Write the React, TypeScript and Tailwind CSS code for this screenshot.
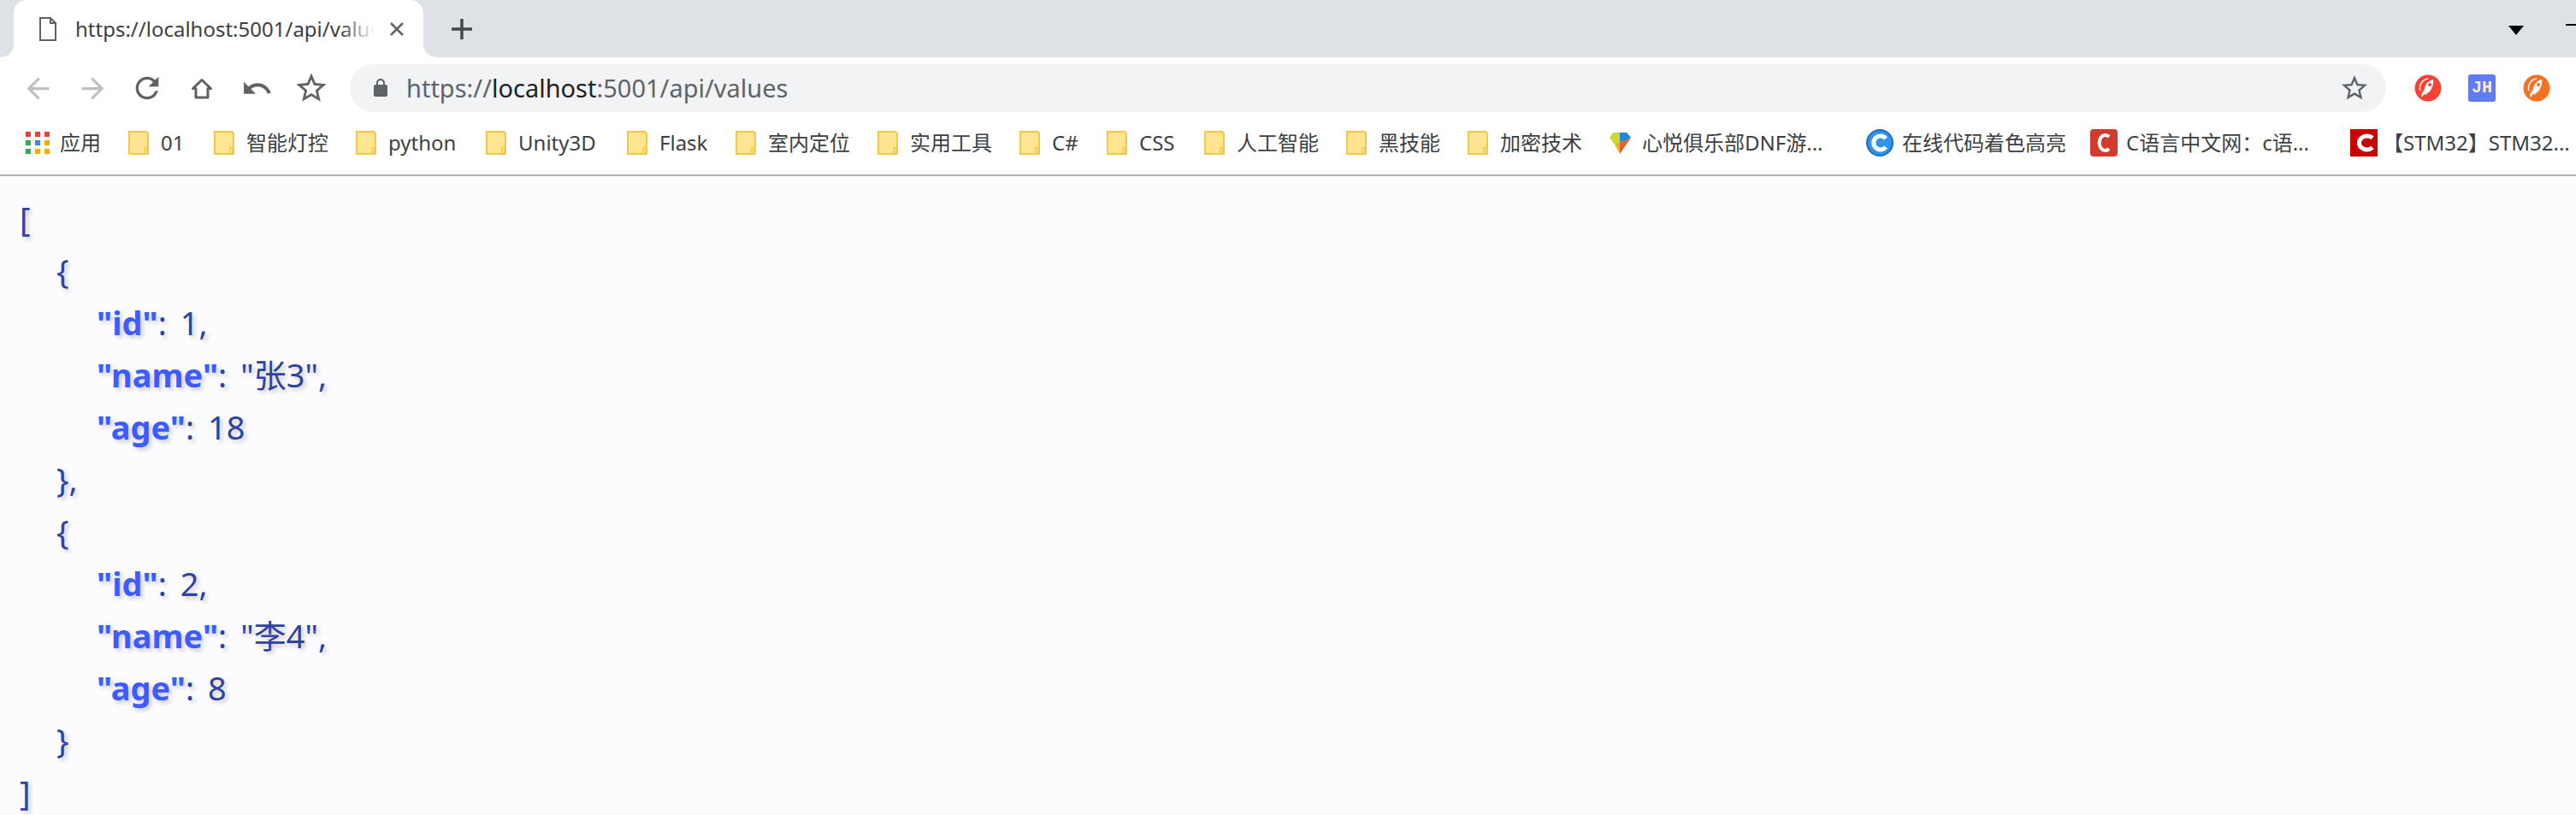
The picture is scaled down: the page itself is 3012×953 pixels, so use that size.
import React from 'react';

const uiFont = "font-['Noto_Sans','Noto_Sans_CJK_SC',sans-serif]";

const Icon = ({ d, className }: { d: string; className: string }) => (
  <svg viewBox="0 0 24 24" className={className} fill="currentColor">
    <path d={d} />
  </svg>
);

const STAR =
  'M22 9.24l-7.19-.62L12 2 9.19 8.63 2 9.24l5.46 4.73L5.82 21 12 17.27 18.18 21l-1.63-7.03L22 9.24zM12 15.4l-3.76 2.27 1-4.28-3.32-2.88 4.38-.38L12 6.1l1.71 4.04 4.38.38-3.32 2.88 1 4.28L12 15.4z';
const BACK = 'M20 11H7.83l5.59-5.59L12 4l-8 8 8 8 1.41-1.41L7.83 13H20v-2z';
const FORWARD = 'M12 4l-1.41 1.41L16.17 11H4v2h12.17l-5.58 5.59L12 20l8-8z';
const RELOAD =
  'M17.65 6.35A7.958 7.958 0 0 0 12 4c-4.42 0-7.99 3.58-7.99 8s3.57 8 7.99 8c3.73 0 6.84-2.55 7.73-6h-2.08A5.99 5.99 0 0 1 12 18c-3.31 0-6-2.69-6-6s2.69-6 6-6c1.66 0 3.14.69 4.22 1.78L13 11h7V4l-2.35 2.35z';
const UNDO =
  'M12.5 8c-2.65 0-5.05.99-6.9 2.6L2 7v9h9l-3.62-3.62c1.39-1.16 3.16-1.88 5.12-1.88 3.54 0 6.55 2.31 7.6 5.5l2.37-.78C21.08 11.03 17.15 8 12.5 8z';
const LOCK =
  'M18 8h-1V6c0-2.76-2.24-5-5-5S7 3.24 7 6v2H6c-1.1 0-2 .9-2 2v10c0 1.1.9 2 2 2h12c1.1 0 2-.9 2-2V10c0-1.1-.9-2-2-2zM9 8V6c0-1.66 1.34-3 3-3s3 1.34 3 3v2H9z';

const Folder = () => (
  <svg width="24" height="28" viewBox="0 0 24 28" className="shrink-0">
    <path d="M1 1h20l2 2v24H1z" fill="#ffe590" stroke="#eec94c" strokeWidth="2" />
    <path d="M19 27v-6a1.5 1.5 0 0 1 3 0v6" fill="none" stroke="#eec94c" strokeWidth="1.5" />
  </svg>
);

const AppsIcon = () => (
  <svg width="28" height="26" viewBox="0 0 28 26" className="shrink-0">
    <rect x="0" y="0" width="6" height="6" fill="#ea4335" />
    <rect x="11" y="0" width="6" height="6" fill="#ea4335" />
    <rect x="22" y="0" width="6" height="6" fill="#ea4335" />
    <rect x="0" y="10" width="6" height="6" fill="#34a853" />
    <rect x="11" y="10" width="6" height="6" fill="#4285f4" />
    <rect x="22" y="10" width="6" height="6" fill="#f9ab00" />
    <rect x="0" y="20" width="6" height="6" fill="#34a853" />
    <rect x="11" y="20" width="6" height="6" fill="#f9ab00" />
    <rect x="22" y="20" width="6" height="6" fill="#f9ab00" />
  </svg>
);

const DiamondIcon = () => (
  <svg width="32" height="28" viewBox="0 0 32 28" className="shrink-0">
    <path d="M8 2h8v10l-6 4L4 8z" fill="#c6d934" />
    <path d="M16 2h8l5 6-9 5-4-1z" fill="#1e88d8" />
    <path d="M10 16l6-4v15z" fill="#f5b31a" />
    <path d="M16 12l4 1 9-5-13 19z" fill="#e4622a" />
  </svg>
);

const BlueC = () => (
  <svg width="32" height="32" viewBox="0 0 32 32" className="shrink-0">
    <circle cx="16" cy="16" r="15" fill="#2f95ec" stroke="#1a6fc0" strokeWidth="2" />
    <path d="M23 11a8 8 0 1 0 0 10" fill="none" stroke="#fff" strokeWidth="5" />
  </svg>
);

const RedC = () => (
  <span className="flex h-8 w-8 shrink-0 items-center justify-center rounded-[4px] bg-[#d13b2f]">
    <svg width="18" height="24" viewBox="0 0 18 24">
      <path d="M15 5a7 9 0 1 0 0 14" fill="none" stroke="#fff" strokeWidth="4" />
    </svg>
  </span>
);

const SquareC = () => (
  <span className="flex h-8 w-8 shrink-0 items-center justify-center bg-[#c90000]">
    <svg width="26" height="22" viewBox="0 0 26 22">
      <path d="M23 5.500A9 8 0 1 0 23 16.500" fill="none" stroke="#fff" strokeWidth="5" />
    </svg>
  </span>
);

const Rocket = ({ bg }: { bg: string }) => (
  <svg width="32" height="32" viewBox="0 0 32 32" className="shrink-0">
    <circle cx="16" cy="16" r="15.500" fill={bg} />
    <path d="M22 6c-5 1-9 5-10 10l-1 4 4 2 3-2c3-4 5-9 4-14z" fill="#fff" />
    <path d="M11 19c-2 2-3 4-3 8l4-4 2 1 1-3z" fill="#fff" />
    <circle cx="18" cy="12" r="2" fill={bg} />
    <path d="M7 19c-2-6 2-13 9-14" fill="none" stroke="#fff" strokeWidth="1.500" />
  </svg>
);

// width = icon + gap + text, fixed per item so the bar lines up
const bookmarks = [
  { label: '应用', icon: <AppsIcon />, cls: 'w-[88px] ml-[30px] gap-[12px]' },
  { label: '01', icon: <Folder />, cls: 'w-[64px] ml-[32px] gap-[14px]' },
  { label: '智能灯控', icon: <Folder />, cls: 'w-[134px] ml-[36px] gap-[14px]' },
  { label: 'python', icon: <Folder />, cls: 'w-[119px] ml-[32px] gap-[14px]' },
  { label: 'Unity3D', icon: <Folder />, cls: 'w-[131px] ml-[33px] gap-[14px]' },
  { label: 'Flask', icon: <Folder />, cls: 'w-[94px] ml-[34px] gap-[14px]' },
  { label: '室内定位', icon: <Folder />, cls: 'w-[134px] ml-[33px] gap-[14px]' },
  { label: '实用工具', icon: <Folder />, cls: 'w-[135px] ml-[32px] gap-[14px]' },
  { label: 'C#', icon: <Folder />, cls: 'w-[70px] ml-[31px] gap-[14px]' },
  { label: 'CSS', icon: <Folder />, cls: 'w-[83px] ml-[32px] gap-[14px]' },
  { label: '人工智能', icon: <Folder />, cls: 'w-[135px] ml-[31px] gap-[14px]' },
  { label: '黑技能', icon: <Folder />, cls: 'w-[110px] ml-[31px] gap-[14px]' },
  { label: '加密技术', icon: <Folder />, cls: 'w-[134px] ml-[32px] gap-[14px]' },
  { label: '心悦俱乐部DNF游...', icon: <DiamondIcon />, cls: 'w-[255px] ml-[28px] gap-[10px]' },
  { label: '在线代码着色高亮', icon: <BlueC />, cls: 'w-[234px] ml-[49px] gap-[10px]' },
  { label: 'C语言中文网：c语...', icon: <RedC />, cls: 'w-[256px] ml-[28px] gap-[10px]' },
  { label: '【STM32】STM32...', icon: <SquareC />, cls: 'w-[270px] ml-[48px] gap-[6px]' },
];

const Bookmark = ({ label, icon, cls }: { label: string; icon: React.ReactNode; cls: string }) => (
  <div className={`flex h-8 shrink-0 items-center ${cls}`}>
    {icon}
    <span className="text-[24px] leading-8 text-[#3c4043]">{label}</span>
  </div>
);

const Key = ({ children }: { children: string }) => (
  <span className="font-bold text-[#3d5cff]">{children}</span>
);

const rows: { indent: string; content: React.ReactNode }[] = [
  { indent: 'pl-[23px]', content: '[' },
  { indent: 'pl-[66px]', content: '{' },
  { indent: 'pl-[113px]', content: <><Key>"id"</Key>: 1,</> },
  { indent: 'pl-[113px]', content: <><Key>"name"</Key>: "张3",</> },
  { indent: 'pl-[113px]', content: <><Key>"age"</Key>: 18</> },
  { indent: 'pl-[66px]', content: '},' },
  { indent: 'pl-[66px]', content: '{' },
  { indent: 'pl-[113px]', content: <><Key>"id"</Key>: 2,</> },
  { indent: 'pl-[113px]', content: <><Key>"name"</Key>: "李4",</> },
  { indent: 'pl-[113px]', content: <><Key>"age"</Key>: 8</> },
  { indent: 'pl-[66px]', content: '}' },
  { indent: 'pl-[23px]', content: ']' },
];

export default function App() {
  return (
    <div className={`flex h-screen w-full flex-col overflow-hidden bg-[#fcfcff] ${uiFont}`}>
      {/* tab strip */}
      <div className="flex h-[67px] shrink-0 bg-[#dee1e6]">
        <div className="w-4 bg-white">
          <div className="h-full rounded-br-[15px] bg-[#dee1e6]" />
        </div>
        <div className="flex w-[479px] items-center rounded-t-[15px] bg-white pl-[30px]">
          <svg width="20" height="28" viewBox="0 0 20 28" className="shrink-0">
            <path d="M1 1h12l6 6v20H1z" fill="none" stroke="#5f6368" strokeWidth="2" />
            <path d="M13 1v6h6" fill="none" stroke="#5f6368" strokeWidth="2" />
          </svg>
          <div className="relative ml-[22px] w-[350px] overflow-hidden whitespace-nowrap text-[24px] leading-8 text-[#3c4043]">
            https://localhost:5001/api/values
            <div className="absolute inset-y-0 right-0 w-[40px] bg-gradient-to-r from-transparent to-white" />
          </div>
          <svg width="18" height="18" viewBox="0 0 18 18" className="ml-[17px] shrink-0">
            <path d="M2 2l14 14M16 2L2 16" stroke="#5f6368" strokeWidth="2.500" />
          </svg>
        </div>
        <div className="w-4 bg-white">
          <div className="h-full rounded-bl-[15px] bg-[#dee1e6]" />
        </div>
        <div className="flex flex-1 items-center">
          <svg width="24" height="24" viewBox="0 0 24 24" className="ml-[17px] shrink-0">
            <path d="M12 0v24M0 12h24" stroke="#45484d" strokeWidth="3.500" />
          </svg>
          <div className="ml-auto mr-[49px] mt-[4px] h-0 w-0 border-x-[9px] border-t-[11px] border-x-transparent border-t-black" />
          <div className="mb-[10px] mr-0 h-[2px] w-3 bg-black" />
        </div>
      </div>

      {/* toolbar */}
      <div className="flex h-[72px] shrink-0 items-center bg-white pl-3">
        <div className="flex w-16 justify-center"><Icon d={BACK} className="h-[39px] w-[39px] text-[#bdc1c6]" /></div>
        <div className="flex w-16 justify-center"><Icon d={FORWARD} className="h-[39px] w-[39px] text-[#bdc1c6]" /></div>
        <div className="flex w-16 justify-center"><Icon d={RELOAD} className="h-10 w-10 text-[#5f6368]" /></div>
        <div className="flex w-16 justify-center">
          <svg width="26" height="25" viewBox="0 0 26 25">
            <path d="M13 2.500L2.500 12.500H6V23H20V12.500H23.500Z" fill="none" stroke="#5f6368" strokeWidth="3" strokeLinejoin="round" />
          </svg>
        </div>
        <div className="flex w-16 justify-center"><Icon d={UNDO} className="h-[37px] w-[37px] text-[#5f6368]" /></div>
        <div className="flex w-16 justify-center"><Icon d={STAR} className="h-[42px] w-[42px] text-[#5f6368]" /></div>
        <div className="ml-[13px] flex h-[56px] w-[2381px] items-center rounded-full bg-[#f1f3f4] pl-[24px] pr-[19px]">
          <Icon d={LOCK} className="h-6 w-6 shrink-0 text-[#5f6368]" />
          <div className="ml-[18px] whitespace-nowrap text-[29px] text-[#5f6368]">
            https://<span className="text-[#202124]">localhost</span>:5001/api/values
          </div>
          <Icon d={STAR} className="ml-auto h-9 w-9 text-[#5f6368]" />
        </div>
        <div className="ml-[33px]"><Rocket bg="#f44336" /></div>
        <div className="ml-[31px] flex h-8 w-8 shrink-0 items-center justify-center rounded-[3px] bg-[#5f7cf2] font-['Liberation_Mono',monospace] text-[20px] font-bold text-[#f3f1c8]">
          JH
        </div>
        <div className="ml-[32px]"><Rocket bg="#f57223" /></div>
      </div>

      {/* bookmarks bar */}
      <div className="flex h-[65px] shrink-0 items-start overflow-hidden whitespace-nowrap bg-white pt-3">
        {bookmarks.map((b) => (
          <Bookmark key={b.label} label={b.label} icon={b.icon} cls={b.cls} />
        ))}
      </div>
      <div className="h-[2px] shrink-0 bg-[#b4b4b4]" />

      {/* response body */}
      <div className="pt-[19px] text-[38px] leading-[61px] text-[#2f429e] [word-spacing:6px] [text-shadow:3px_3px_5px_rgba(0,0,0,0.2)]">
        {rows.map((r, i) => (
          <div key={i} className={`h-[61px] ${r.indent}`}>
            {r.content}
          </div>
        ))}
      </div>
    </div>
  );
}
